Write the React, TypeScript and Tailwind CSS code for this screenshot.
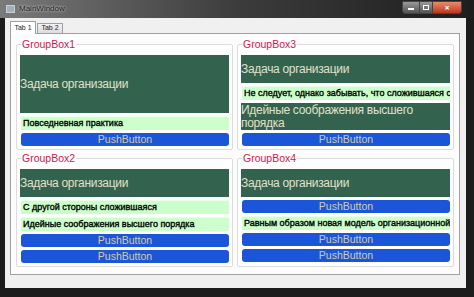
import React from "react";

const font = { fontFamily: '"Liberation Sans", Arial, sans-serif' };

function GreenBlock({ h, text, wrap }: { h: string; text: string; wrap?: boolean }) {
  return (
    <div
      className={`${h} shrink-0 bg-[#33634f] text-[#e2e0c8] text-[12px] tracking-[-0.3px] flex items-center overflow-hidden -ml-px ${
        wrap ? "leading-[13px]" : "whitespace-nowrap"
      }`}
      style={font}
    >
      <span>{text}</span>
    </div>
  );
}

function Label({ text }: { text: string }) {
  return (
    <div
      className="h-[14px] shrink-0 bg-[#ccffcc] border-t border-[#e8ffe8] text-black text-[9px] [-webkit-text-stroke:0.35px_#000] flex items-center pl-[2px] whitespace-nowrap overflow-hidden"
      style={font}
    >
      {text}
    </div>
  );
}

function Button() {
  return (
    <div
      className="h-[13px] shrink-0 bg-[#1b56d9] rounded-[3px] text-[#d4cca4] text-[10.5px] leading-none flex items-center justify-center"
      style={font}
    >
      PushButton
    </div>
  );
}

function GroupBox({ title, children }: { title: string; children: React.ReactNode }) {
  return (
    <div className="border border-[#dcdcdc] rounded-[2px] bg-white pl-[4px] pr-[3px] pb-[3px] flex flex-col gap-[3px]">
      <div className="h-[13px] -mt-[7px] mb-[1px] shrink-0 flex">
        <span className="bg-white px-[1px] text-[10.5px] leading-[13px] text-[#d6134d]" style={font}>
          {title}
        </span>
      </div>
      {children}
    </div>
  );
}

export default function App() {
  return (
    <div className="w-[474px] h-[297px] bg-[#1c1c1c] flex flex-col overflow-hidden">
      {/* title bar */}
      <div className="h-[18px] shrink-0 bg-gradient-to-r from-[#7a7a7a] via-[#3c3c3c] to-[#1e1e1e] flex items-center relative">
        <div className="ml-[6px] w-[9px] h-[8px] border border-[#cfcfcf] bg-[#9fb0c0]" />
        <span
          className="ml-[4px] text-[8px] text-[#1a1a1a] [text-shadow:0_0_3px_#ffffff]"
          style={font}
        >
          MainWindow
        </span>
        <div className="absolute right-[12px] top-[1px] flex h-[13px] rounded-b-[3px] overflow-hidden border border-[#444]">
          <div className="w-[16px] bg-gradient-to-b from-[#9a9a9a] to-[#555] flex items-end justify-center pb-[3px]">
            <div className="w-[6px] h-[2px] bg-white" />
          </div>
          <div className="w-[13px] bg-gradient-to-b from-[#9a9a9a] to-[#555] flex items-center justify-center border-l border-[#444]">
            <div className="w-[6px] h-[5px] border border-white" />
          </div>
          <div className="w-[29px] bg-gradient-to-b from-[#e88a6c] to-[#c0321a] flex items-center justify-center border-l border-[#444] text-white text-[9px] font-bold">
            ×
          </div>
        </div>
      </div>
      {/* frame + client */}
      <div className="h-[279px] shrink-0 pl-[5px] pr-[8px] pb-[9px] flex">
        <div className="flex-1 bg-[#f0f0f0] flex flex-col pt-[4px] pl-[5px] pr-[6px] pb-[13px]">
          <div className="flex h-[11px] shrink-0 items-end">
            <div
              className="h-[13px] w-[26px] bg-white border border-b-0 border-[#a0a0a0] text-[7px] flex items-center justify-center text-[#222] relative z-10 -mb-px"
              style={font}
            >
              Tab 1
            </div>
            <div
              className="h-[10px] w-[26px] ml-[1px] bg-gradient-to-b from-[#f2f2f2] to-[#dcdcdc] border border-b-0 border-[#a0a0a0] text-[7px] flex items-center justify-center text-[#222]"
              style={font}
            >
              Tab 2
            </div>
          </div>
          <div className="h-[242px] shrink-0 bg-[#fcfcfc] border border-[#a0a0a0] pl-[5px] pr-[5px] pt-[10px] pb-[7px] grid grid-cols-2 grid-rows-[106px_109px] gap-x-[4px] gap-y-[8px]">
            <GroupBox title="GroupBox1">
              <GreenBlock h="h-[58px]" text="Задача организации" />
              <Label text="Повседневная практика" />
              <Button />
            </GroupBox>
            <GroupBox title="GroupBox3">
              <GreenBlock h="h-[28px]" text="Задача организации" />
              <Label text="Не следует, однако забывать, что сложившаяся структура" />
              <GreenBlock h="h-[27px]" text="Идейные соображения высшего порядка" wrap />
              <Button />
            </GroupBox>
            <GroupBox title="GroupBox2">
              <GreenBlock h="h-[28px]" text="Задача организации" />
              <Label text="С другой стороны сложившаяся" />
              <Label text="Идейные соображения высшего порядка" />
              <Button />
              <Button />
            </GroupBox>
            <GroupBox title="GroupBox4">
              <GreenBlock h="h-[28px]" text="Задача организации" />
              <Button />
              <Label text="Равным образом новая модель организационной деятельности" />
              <Button />
              <Button />
            </GroupBox>
          </div>
        </div>
      </div>
    </div>
  );
}
